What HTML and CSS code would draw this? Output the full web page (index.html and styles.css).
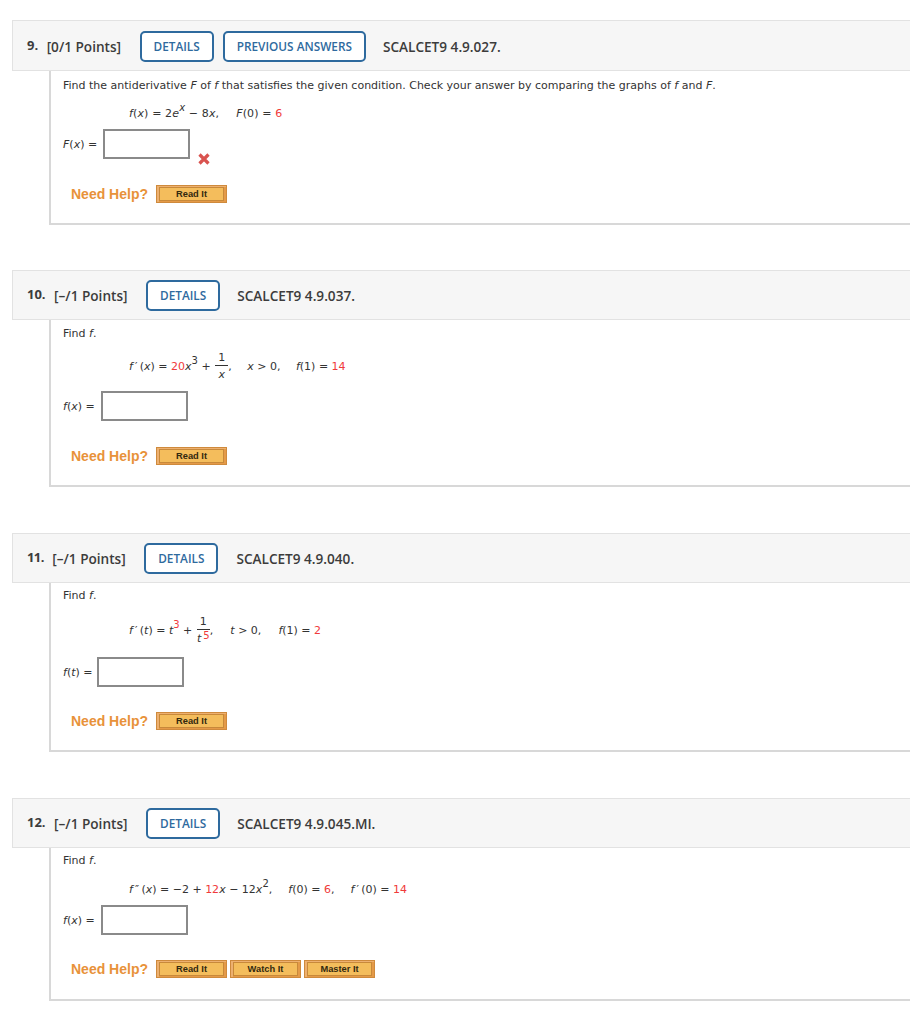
FILE: index.html
```html
<!DOCTYPE html>
<html>
<head>
  <meta charset="UTF-8" />
  <title>Assignment</title>
  <link rel="stylesheet" href="styles.css">
</head>
<body>
  <div class="question q9">
    <div class="q-head">
      <span class="q-num">9.</span>
      <span class="q-points">[0/1 Points]</span>
      <span class="q-btn">DETAILS</span>
      <span class="q-btn">PREVIOUS ANSWERS</span>
      <span class="q-code">SCALCET9 4.9.027.</span>
    </div>
    <div class="q-body">
      <p class="prompt">Find the antiderivative <i>F</i> of <i>f</i> that satisfies the given condition. Check your answer by comparing the graphs of <i>f</i> and <i>F</i>.</p>
      <p class="formula"><i>f</i>(<i>x</i>) = 2<i>e</i><sup><i>x</i></sup> &minus; 8<i>x</i>,<span class="sp"></span><i>F</i>(0) = <span class="red">6</span></p>
      <div class="answer">
        <span class="label"><i>F</i>(<i>x</i>) =</span>
        <span class="box"></span>
        <svg class="wrong" width="12" height="12" viewBox="0 0 12 12"><path d="M1.5 1.5 L10.5 10.5 M10.5 1.5 L1.5 10.5" stroke="#d9534f" stroke-width="3.2"/></svg>
      </div>
      <div class="help">
        <span class="need">Need Help?</span>
        <span class="tut">Read It</span>
      </div>
    </div>
  </div>

  <div class="question q10">
    <div class="q-head">
      <span class="q-num">10.</span>
      <span class="q-points">[&ndash;/1 Points]</span>
      <span class="q-btn">DETAILS</span>
      <span class="q-code">SCALCET9 4.9.037.</span>
    </div>
    <div class="q-body">
      <p class="prompt">Find <i>f</i>.</p>
      <p class="formula tall"><i>f</i>&thinsp;&prime;&thinsp;(<i>x</i>) = <span class="red">20</span><i>x</i><sup>3</sup> + <span class="frac"><span class="top">1</span><span class="bot"><i>x</i></span></span>,<span class="sp"></span><i>x</i> &gt; 0,<span class="sp"></span><i>f</i>(1) = <span class="red">14</span></p>
      <div class="answer">
        <span class="label"><i>f</i>(<i>x</i>) =</span>
        <span class="box"></span>
      </div>
      <div class="help">
        <span class="need">Need Help?</span>
        <span class="tut">Read It</span>
      </div>
    </div>
  </div>

  <div class="question q11">
    <div class="q-head">
      <span class="q-num">11.</span>
      <span class="q-points">[&ndash;/1 Points]</span>
      <span class="q-btn">DETAILS</span>
      <span class="q-code">SCALCET9 4.9.040.</span>
    </div>
    <div class="q-body">
      <p class="prompt">Find <i>f</i>.</p>
      <p class="formula tall"><i>f</i>&thinsp;&prime;&thinsp;(<i>t</i>) = <i>t</i><sup class="red">3</sup> + <span class="frac"><span class="top">1</span><span class="bot"><i>t</i><sup class="red">5</sup></span></span>,<span class="sp"></span><i>t</i> &gt; 0,<span class="sp"></span><i>f</i>(1) = <span class="red">2</span></p>
      <div class="answer">
        <span class="label"><i>f</i>(<i>t</i>) =</span>
        <span class="box"></span>
      </div>
      <div class="help">
        <span class="need">Need Help?</span>
        <span class="tut">Read It</span>
      </div>
    </div>
  </div>

  <div class="question q12">
    <div class="q-head">
      <span class="q-num">12.</span>
      <span class="q-points">[&ndash;/1 Points]</span>
      <span class="q-btn">DETAILS</span>
      <span class="q-code">SCALCET9 4.9.045.MI.</span>
    </div>
    <div class="q-body">
      <p class="prompt">Find <i>f</i>.</p>
      <p class="formula"><i>f</i>&thinsp;&Prime;&thinsp;(<i>x</i>) = &minus;2 + <span class="red">12</span><i>x</i> &minus; 12<i>x</i><sup>2</sup>,<span class="sp"></span><i>f</i>(0) = <span class="red">6</span>,<span class="sp"></span><i>f</i>&thinsp;&prime;&thinsp;(0) = <span class="red">14</span></p>
      <div class="answer">
        <span class="label"><i>f</i>(<i>x</i>) =</span>
        <span class="box"></span>
      </div>
      <div class="help">
        <span class="need">Need Help?</span>
        <span class="tut">Read It</span>
        <span class="tut">Watch It</span>
        <span class="tut">Master It</span>
      </div>
    </div>
  </div>
</body>
</html>
```

FILE: styles.css
```css
body {
  margin: 0;
  padding: 20px 0 0 12px;
  background: #fff;
  font-family: "DejaVu Sans", Verdana, sans-serif;
  font-size: 11px;
  color: #333;
  overflow-x: hidden;
}
.question {
  margin-bottom: 46px;
}
.q-head {
  display: flex;
  align-items: center;
  box-sizing: border-box;
  height: 50px;
  padding-left: 14px;
  background: #f6f6f6;
  border: 1px solid #e2e2e2;
  border-right: none;
  font-family: "Open Sans", sans-serif;
  font-weight: 600;
  color: #3c3c3c;
}
.q9 .q-head { height: 51px; padding-top: 2px; }
.q9 { margin-bottom: 45px; }
.q-num {
  font-size: 13px;
  font-weight: 700;
  margin-right: 8.5px;
  margin-top: -3px;
}
.q11 .q-num { letter-spacing: -0.6px; }
.q-points {
  font-size: 13.6px;
  margin-right: 18.5px;
}
.q-btn {
  box-sizing: border-box;
  height: 31px;
  line-height: 26px;
  padding: 0 12px;
  margin-right: 9px;
  border: 2px solid #2e6a9e;
  border-radius: 5px;
  background: #fff;
  color: #2e6a9e;
  font-size: 11.8px;
}
.q-code {
  font-size: 13.6px;
  margin-left: 8px;
}
.q11 .q-code { margin-left: 9px; }
.q-body {
  margin-left: 37px;
  padding: 6px 0 0 12px;
  border-left: 2px solid #d8d8d8;
  border-bottom: 2px solid #d8d8d8;
  box-sizing: border-box;
}
.q9 .q-body { height: 154px; padding-top: 8px; }
.q10 .q-body { height: 167px; padding-top: 7px; }
.q11 .q-body { height: 169px; }
.q12 .q-body { height: 153px; }
.prompt {
  margin: 0;
  line-height: 14px;
}
.formula {
  margin: 13px 0 0 66px;
  line-height: 16px;
  white-space: pre;
}
.q9 .formula { letter-spacing: 0.13px; }
.formula.tall {
  margin-top: 9px;
  height: 34px;
  line-height: 34px;
}
.q11 .formula.tall { margin-top: 11px; }
.q12 .formula { margin-top: 14px; }
.sp {
  display: inline-block;
  width: 17px;
}
.q10 .sp { width: 15.5px; }
.q12 .sp { width: 16px; }
sup {
  font-size: 10px;
  line-height: 0;
  vertical-align: 6px;
}
.red { color: #f03a3a; }
.frac {
  display: inline-flex;
  flex-direction: column;
  align-items: center;
  vertical-align: middle;
  margin-left: 1px;
}
.frac .top {
  line-height: 15px;
  border-bottom: 1px solid #333;
  padding: 0 3px;
  align-self: stretch;
  text-align: center;
}
.frac .bot {
  line-height: 18px;
}
.frac sup {
  vertical-align: 3px;
  margin-left: 2px;
}
.answer {
  display: flex;
  align-items: center;
  margin-top: 7px;
}
.q11 .answer { margin-top: 9px; }
.label {
  margin-right: 6px;
}
.q11 .label { margin-right: 4px; }
.box {
  display: inline-block;
  box-sizing: border-box;
  width: 87px;
  height: 30px;
  background: #fff;
  border: 2px solid #8a8a8a;
}
.wrong {
  align-self: flex-end;
  margin: 0 0 -6px 8px;
}
.help {
  display: flex;
  align-items: center;
  gap: 3px;
  margin-top: 25px;
  padding-left: 8px;
}
.q9 .help, .q10 .help { margin-top: 26px; }
.need {
  font-family: "Liberation Sans", Arial, sans-serif;
  font-size: 14px;
  font-weight: 700;
  color: #e8923a;
  margin-right: 5px;
}
.tut {
  box-sizing: border-box;
  width: 71px;
  height: 18px;
  line-height: 17px;
  text-align: center;
  font-family: "Liberation Sans", Arial, sans-serif;
  font-size: 9.3px;
  font-weight: 700;
  color: #33290f;
  background: #f4bd5c;
  border: 1px solid #cf8a3c;
  box-shadow: inset 2px 1px 0 #edb070, inset -2px -1px 0 #e49a48, inset 3px 2px 0 #c8893a, inset -3px -2px 0 #c8893a;
}
```
